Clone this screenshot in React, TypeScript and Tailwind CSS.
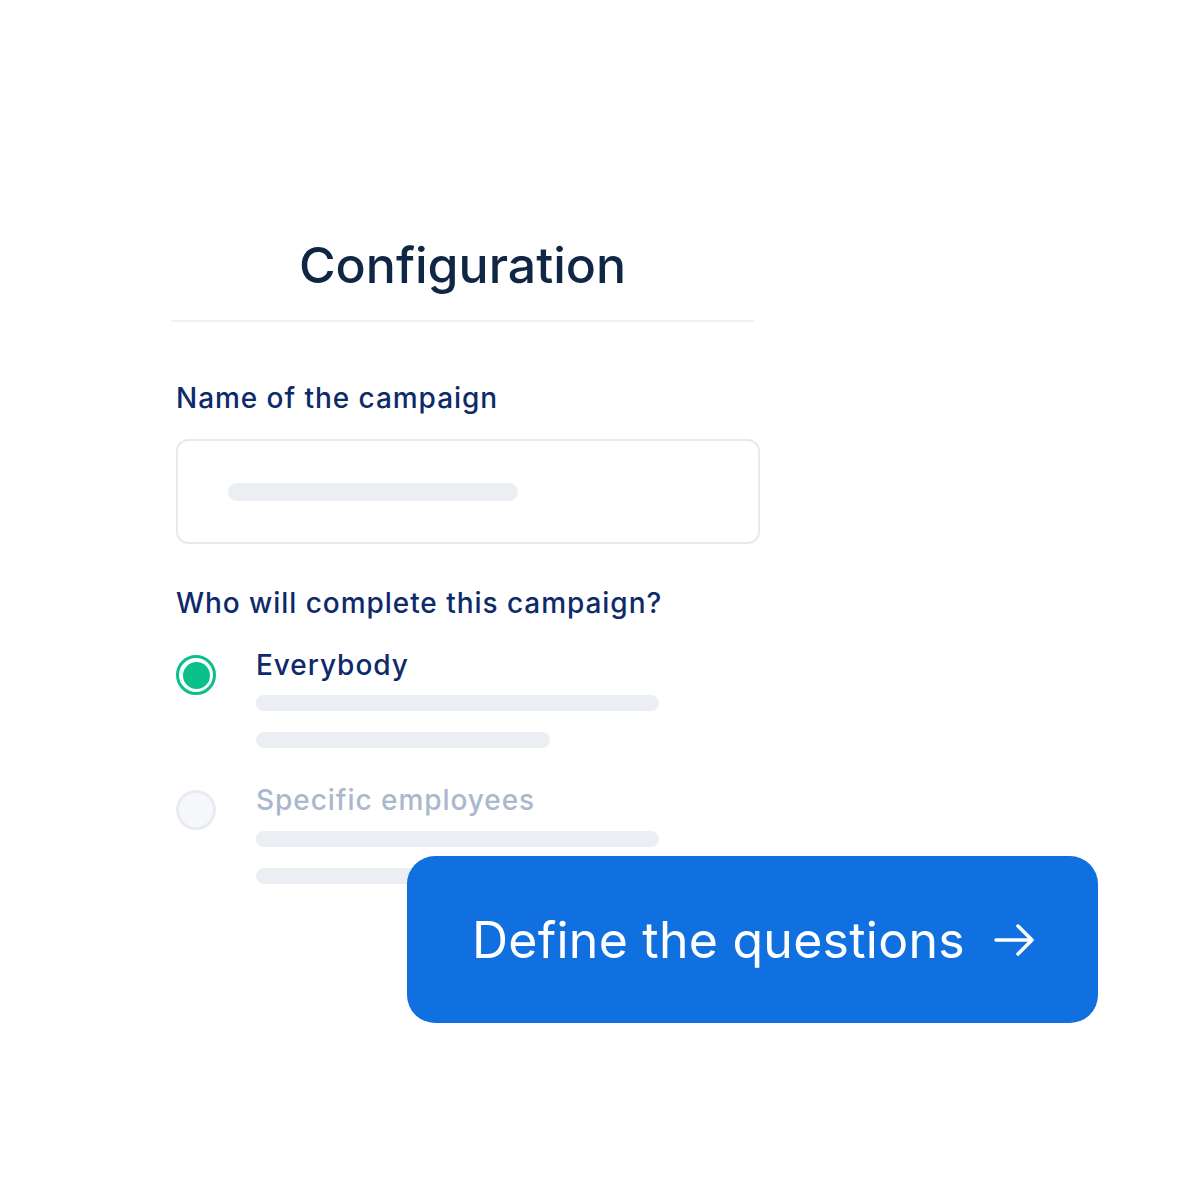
import React from "react";

const font = { fontFamily: "Inter, 'Noto Sans', sans-serif" };

function Bar({ w }: { w: number }) {
  return <div className="h-[16px] rounded-full bg-[#ebeff3]" style={{ width: w }} />;
}

export default function App() {
  return (
    <div className="relative w-[1200px] h-[1200px] bg-white" style={font}>
      <div className="absolute left-[171px] top-[235px] w-[590px] flex flex-col">
        <div className="w-[583px] text-center text-[50px] leading-[60px] font-medium text-[#0f2644]">Configuration</div>
        <div className="mt-[25px] w-[583px] h-[2px] bg-[#eef1f5]" />
        <div className="pl-[5px] mt-[59px] text-[28px] leading-[34px] font-medium tracking-[0.95px] text-[#0d2a6b]">Name of the campaign</div>
        <div className="ml-[5px] mt-[24px] w-[584px] h-[105px] rounded-[12px] border-2 border-[#e6eaf0] flex items-center pl-[50px]">
          <div className="w-[290px] h-[18px] rounded-full bg-[#ebeff3]" />
        </div>
        <div className="pl-[5px] mt-[42px] text-[28px] leading-[34px] font-medium tracking-[0.95px] text-[#0d2a6b]">Who will complete this campaign?</div>
        <div className="pl-[5px] mt-[28px] flex">
          <div className="w-[40px] h-[40px] rounded-full border-[3px] border-[#0bc08a] flex items-center justify-center mt-[7px]">
            <div className="w-[27px] h-[27px] rounded-full bg-[#0bc08a]" />
          </div>
          <div className="ml-[40px] flex flex-col">
            <div className="text-[28px] leading-[34px] font-medium tracking-[0.95px] text-[#0d2a6b]">Everybody</div>
            <div className="mt-[13px] flex flex-col gap-[21px]">
              <Bar w={403} />
              <Bar w={294} />
            </div>
          </div>
        </div>
        <div className="pl-[5px] mt-[35px] flex">
          <div className="w-[40px] h-[40px] rounded-full border-[3px] border-[#e8ecf2] bg-[#f5f7fb] mt-[7px]" />
          <div className="ml-[40px] flex flex-col">
            <div className="text-[28px] leading-[34px] font-medium tracking-[0.95px] text-[#a9b8cc]">Specific employees</div>
            <div className="mt-[14px] flex flex-col gap-[21px]">
              <Bar w={403} />
              <Bar w={294} />
            </div>
          </div>
        </div>
      </div>
      <div className="absolute left-[407px] top-[856px] w-[691px] h-[167px] rounded-[28px] bg-[#1070df] flex items-center pl-[65px] text-white">
        <span className="text-[50px] leading-[60px] tracking-[0.25px]">Define the questions</span>
        <svg className="ml-[29px]" width="42" height="34" viewBox="0 0 42 34" fill="none" stroke="white" strokeWidth="3.5" strokeLinecap="round" strokeLinejoin="round">
          <path d="M2 17 H38 M24 3 L38 17 L24 31" />
        </svg>
      </div>
    </div>
  );
}
